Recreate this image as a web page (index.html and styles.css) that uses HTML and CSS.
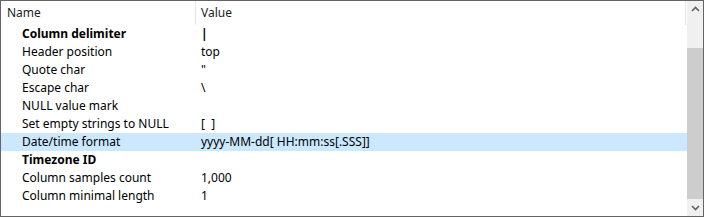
FILE: index.html
```
<!DOCTYPE html>
<html lang="en">
<head>
    <meta charset="utf-8">
    <title>Properties</title>
    <link rel="stylesheet" href="styles.css">
</head>
<body>
    <div id="panel">
        <div id="tabel">
            <div class="hoved">
                <div class="celle navn">Name</div>
                <div class="celle vaerdi">Value</div>
            </div>
            <div class="raekke fed"><div class="navn">Column delimiter</div><div class="vaerdi">|</div></div>
            <div class="raekke"><div class="navn">Header position</div><div class="vaerdi">top</div></div>
            <div class="raekke"><div class="navn">Quote char</div><div class="vaerdi">"</div></div>
            <div class="raekke"><div class="navn">Escape char</div><div class="vaerdi">\</div></div>
            <div class="raekke"><div class="navn">NULL value mark</div><div class="vaerdi"></div></div>
            <div class="raekke"><div class="navn">Set empty strings to NULL</div><div class="vaerdi">[&nbsp; ]</div></div>
            <div class="raekke valgt"><div class="navn">Date/time format</div><div class="vaerdi">yyyy-MM-dd[ HH:mm:ss[.SSS]]</div></div>
            <div class="raekke fed"><div class="navn">Timezone ID</div><div class="vaerdi"></div></div>
            <div class="raekke"><div class="navn">Column samples count</div><div class="vaerdi">1,000</div></div>
            <div class="raekke"><div class="navn">Column minimal length</div><div class="vaerdi">1</div></div>
        </div>
        <div id="rulle">
            <div class="pil">
                <svg width="9" height="6" viewBox="0 0 9 6"><path d="M1 5 L4.5 1.5 L8 5" fill="none" stroke="#606060" stroke-width="1.6"/></svg>
            </div>
            <div class="spor"><div class="greb"></div></div>
            <div class="pil">
                <svg width="9" height="6" viewBox="0 0 9 6"><path d="M1 1 L4.5 4.5 L8 1" fill="none" stroke="#606060" stroke-width="1.6"/></svg>
            </div>
        </div>
    </div>
</body>
</html>
```

FILE: styles.css
```
html, body {
    margin: 0;
    padding: 0;
    background-color: white;
}

#panel {
    display: flex;
    width: 704px;
    height: 217px;
    box-sizing: border-box;
    border: 1px solid #646464;
    font-family: "Noto Sans", "Segoe UI", sans-serif;
    font-size: 12px;
    color: #000;
}

#tabel {
    flex: 1;
}

.hoved {
    display: grid;
    grid-template-columns: 195px 490px;
    height: 24px;
}

.hoved .celle {
    border-right: 1px solid #e5e5e5;
    line-height: 24px;
    padding-left: 6px;
    color: #1e1e1e;
}

.hoved .vaerdi {
    padding-left: 5px;
}

.raekke {
    display: grid;
    grid-template-columns: 195px 490px;
    height: 18px;
    line-height: 18px;
}

.raekke .navn {
    padding-left: 21px;
}

.raekke .vaerdi {
    padding-left: 5px;
}

.fed {
    font-weight: bold;
}

.valgt {
    background-color: #cce8ff;
}

#rulle {
    width: 16px;
    display: flex;
    flex-direction: column;
    background-color: #f0f0f0;
}

.pil {
    height: 16px;
    display: flex;
    align-items: center;
    justify-content: center;
}

.spor {
    flex: 1;
    padding-top: 31px;
    padding-bottom: 1px;
    display: flex;
}

.greb {
    flex: 1;
    background-color: #cdcdcd;
}
```
